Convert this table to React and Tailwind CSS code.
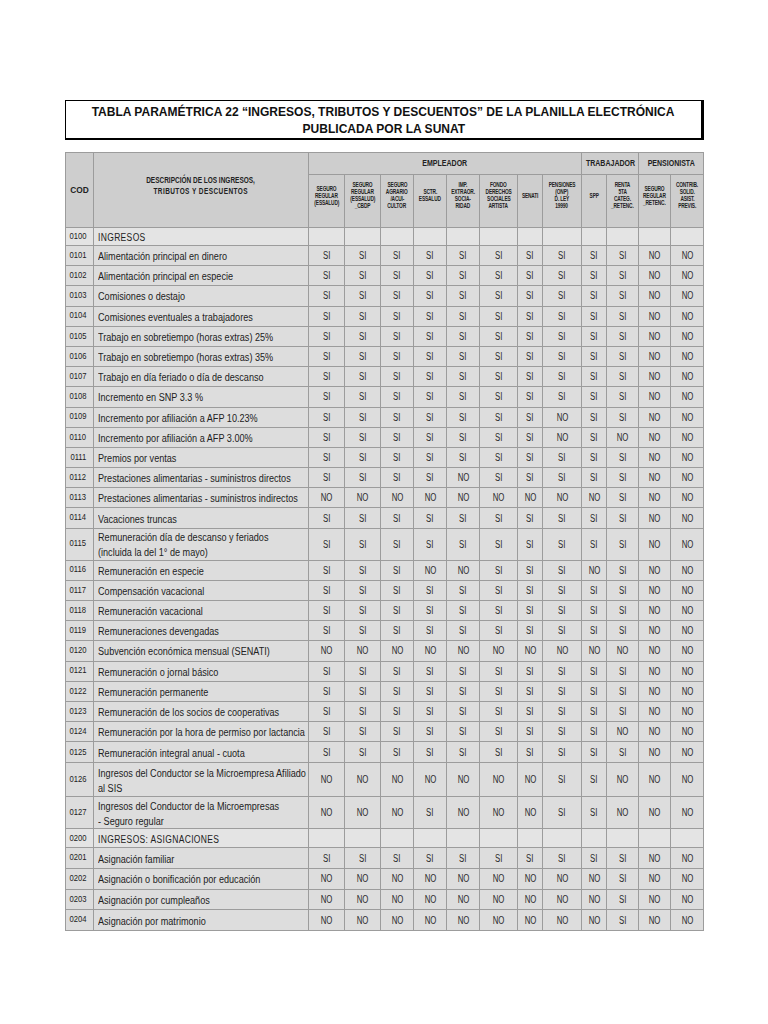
import React from "react";

const S = "SI";
const N = "NO";

const COLS = [
  { w: 36, label: ["SEGURO", "REGULAR", "(ESSALUD)"] },
  { w: 36, label: ["SEGURO", "REGULAR", "(ESSALUD)", "_CBDP"] },
  { w: 33, label: ["SEGURO", "AGRARIO", "/ACUI-", "CULTOR"] },
  { w: 33, label: ["SCTR.", "ESSALUD"] },
  { w: 33, label: ["IMP.", "EXTRAOR.", "SOCIA-", "RIDAD"] },
  { w: 38, label: ["FONDO", "DERECHOS", "SOCIALES", "ARTISTA"] },
  { w: 25, label: ["SENATI"] },
  { w: 39, label: ["PENSIONES", "(ONP)", "D. LEY", "19990"] },
  { w: 25, label: ["SPP"] },
  { w: 32, label: ["RENTA", "5TA", "CATEG.", "_RETENC."] },
  { w: 32, label: ["SEGURO", "REGULAR", "_RETENC."] },
  { w: 33, label: ["CONTRIB.", "SOLID.", "ASIST.", "PREVIS."] },
];

const STD = [S, S, S, S, S, S, S, S, S, S, N, N];

const ROWS = [
  { cod: "0100", desc: "INGRESOS", group: true, h: "h-[18px]" },
  { cod: "0101", desc: "Alimentación principal en dinero", v: STD },
  { cod: "0102", desc: "Alimentación principal en especie", v: STD },
  { cod: "0103", desc: "Comisiones o destajo", v: STD },
  { cod: "0104", desc: "Comisiones eventuales a trabajadores", v: STD },
  { cod: "0105", desc: "Trabajo en sobretiempo (horas extras) 25%", v: STD },
  { cod: "0106", desc: "Trabajo en sobretiempo (horas extras) 35%", v: STD },
  { cod: "0107", desc: "Trabajo en día feriado o día de descanso", v: STD },
  { cod: "0108", desc: "Incremento en SNP 3.3 %", v: STD },
  { cod: "0109", desc: "Incremento por afiliación a AFP 10.23%", v: [S, S, S, S, S, S, S, N, S, S, N, N] },
  { cod: "0110", desc: "Incremento por afiliación a AFP 3.00%", v: [S, S, S, S, S, S, S, N, S, N, N, N] },
  { cod: "0111", desc: "Premios por ventas", v: STD },
  { cod: "0112", desc: "Prestaciones alimentarias - suministros directos", v: [S, S, S, S, N, S, S, S, S, S, N, N] },
  { cod: "0113", desc: "Prestaciones alimentarias - suministros indirectos", v: [N, N, N, N, N, N, N, N, N, S, N, N] },
  { cod: "0114", desc: "Vacaciones truncas", v: STD },
  { cod: "0115", desc: ["Remuneración día de descanso y feriados", "(incluida la del 1° de mayo)"], v: STD, h: "h-[32px]" },
  { cod: "0116", desc: "Remuneración en especie", v: [S, S, S, N, N, S, S, S, N, S, N, N] },
  { cod: "0117", desc: "Compensación vacacional", v: STD },
  { cod: "0118", desc: "Remuneración vacacional", v: STD },
  { cod: "0119", desc: "Remuneraciones devengadas", v: STD },
  { cod: "0120", desc: "Subvención económica mensual (SENATI)", v: [N, N, N, N, N, N, N, N, N, N, N, N] },
  { cod: "0121", desc: "Remuneración o jornal básico", v: STD },
  { cod: "0122", desc: "Remuneración permanente", v: STD },
  { cod: "0123", desc: "Remuneración de los socios de cooperativas", v: STD },
  { cod: "0124", desc: "Remuneración por la hora de permiso por lactancia", v: [S, S, S, S, S, S, S, S, S, N, N, N] },
  { cod: "0125", desc: "Remuneración integral anual - cuota", v: STD, h: "h-[21px]" },
  { cod: "0126", desc: ["Ingresos del Conductor se la Microempresa Afiliado", "al SIS"], v: [N, N, N, N, N, N, N, S, S, N, N, N], h: "h-[34px]" },
  { cod: "0127", desc: ["Ingresos del Conductor de la Microempresas", "- Seguro regular"], v: [N, N, N, S, N, N, N, S, S, N, N, N], h: "h-[32px]" },
  { cod: "0200", desc: "INGRESOS: ASIGNACIONES", group: true, h: "h-[19px]" },
  { cod: "0201", desc: "Asignación familiar", v: STD, h: "h-[20.7px]" },
  { cod: "0202", desc: "Asignación o bonificación por educación", v: [N, N, N, N, N, N, N, N, N, S, N, N], h: "h-[20.7px]" },
  { cod: "0203", desc: "Asignación por cumpleaños", v: [N, N, N, N, N, N, N, N, N, S, N, N], h: "h-[20.7px]" },
  { cod: "0204", desc: "Asignación por matrimonio", v: [N, N, N, N, N, N, N, N, N, S, N, N], h: "h-[20.7px]" },
];

const font = "font-['Liberation_Sans',Arial,sans-serif]";
const cell = "border border-[#9c9c9c]";

// condensed text: the source uses a narrow face, so squeeze a regular one
function Sq({ children, className = "" }) {
  return <span className={`inline-block whitespace-nowrap ${className}`}>{children}</span>;
}

function Center({ children, className = "" }) {
  return (
    <div className="flex justify-center">
      <Sq className={className}>{children}</Sq>
    </div>
  );
}

export default function App() {
  return (
    <div className={`${font} w-[768px] h-[1024px] bg-white pt-[100px]`}>
      {/* Title */}
      <div className="mx-[65px] w-[639px] h-[40px] border border-black border-r-[3px] border-b-2 flex flex-col items-center justify-center">
        <p className="whitespace-nowrap font-bold text-[13px] leading-[17px] text-[#111] scale-x-[0.925]">
          TABLA PARAMÉTRICA 22 “INGRESOS, TRIBUTOS Y DESCUENTOS” DE LA PLANILLA ELECTRÓNICA
        </p>
        <p className="whitespace-nowrap font-bold text-[13px] leading-[17px] text-[#111] scale-x-[0.925]">
          PUBLICADA POR LA SUNAT
        </p>
      </div>

      <table className="mt-[12px] ml-[65px] w-[639px] border-collapse table-fixed text-[#222]">
        <colgroup>
          <col className="w-[28px]" />
          <col className="w-[215px]" />
          {COLS.map((c, i) => (
            <col key={i} style={{ width: c.w }} />
          ))}
        </colgroup>
        <thead>
          <tr className="h-[22px] bg-[#cecece]">
            <th rowSpan={2} className={`${cell} p-0`}>
              <Center className="text-[9.5px] font-bold scale-x-[0.88]">COD</Center>
            </th>
            <th rowSpan={2} className={`${cell} p-0 pb-[8px]`}>
              <Center className="text-[9px] font-bold leading-[11px] scale-x-[0.72]">DESCRIPCIÓN DE LOS INGRESOS,</Center>
              <Center className="text-[9px] font-bold leading-[11px] scale-x-[0.72] tracking-[0.6px]">TRIBUTOS Y DESCUENTOS</Center>
            </th>
            <th colSpan={8} className={`${cell} p-0`}>
              <Center className="text-[9px] font-bold scale-x-[0.78]">EMPLEADOR</Center>
            </th>
            <th colSpan={2} className={`${cell} p-0`}>
              <Center className="text-[9px] font-bold scale-x-[0.78]">TRABAJADOR</Center>
            </th>
            <th colSpan={2} className={`${cell} p-0`}>
              <Center className="text-[9px] font-bold scale-x-[0.78]">PENSIONISTA</Center>
            </th>
          </tr>
          <tr className="h-[53px] bg-[#cecece]">
            {COLS.map((c, i) => (
              <th key={i} className={`${cell} p-0 pb-[12px]`}>
                {c.label.map((l, j) => (
                  <Center key={j} className="text-[6.5px] font-bold leading-[7px] scale-x-[0.74] tracking-[-0.2px]">
                    {l}
                  </Center>
                ))}
              </th>
            ))}
          </tr>
        </thead>
        <tbody>
          {ROWS.map((r) => (
            <tr key={r.cod} className={`${r.h || "h-[20.2px]"} ${r.group ? "bg-[#e4e4e4]" : "bg-[#dddddd]"}`}>
              <td className={`${cell} p-0 pr-[3px]`}>
                <Center className="text-[9px] scale-x-[0.85]">{r.cod}</Center>
              </td>
              <td className={`${cell} p-0 pl-[4px]`}>
                {(Array.isArray(r.desc) ? r.desc : [r.desc]).map((d, j) => (
                  <div key={j} className="leading-[13px]">
                    <Sq className={`text-[10px] origin-left ${r.group ? "scale-x-[0.85] tracking-[0.4px]" : "scale-x-[0.91]"}`}>{d}</Sq>
                  </div>
                ))}
              </td>
              {COLS.map((_, i) => (
                <td key={i} className={`${cell} p-0`}>
                  {r.v && <Center className="text-[10px] scale-x-[0.78] text-[#2a2a2a]">{r.v[i]}</Center>}
                </td>
              ))}
            </tr>
          ))}
        </tbody>
      </table>
    </div>
  );
}
